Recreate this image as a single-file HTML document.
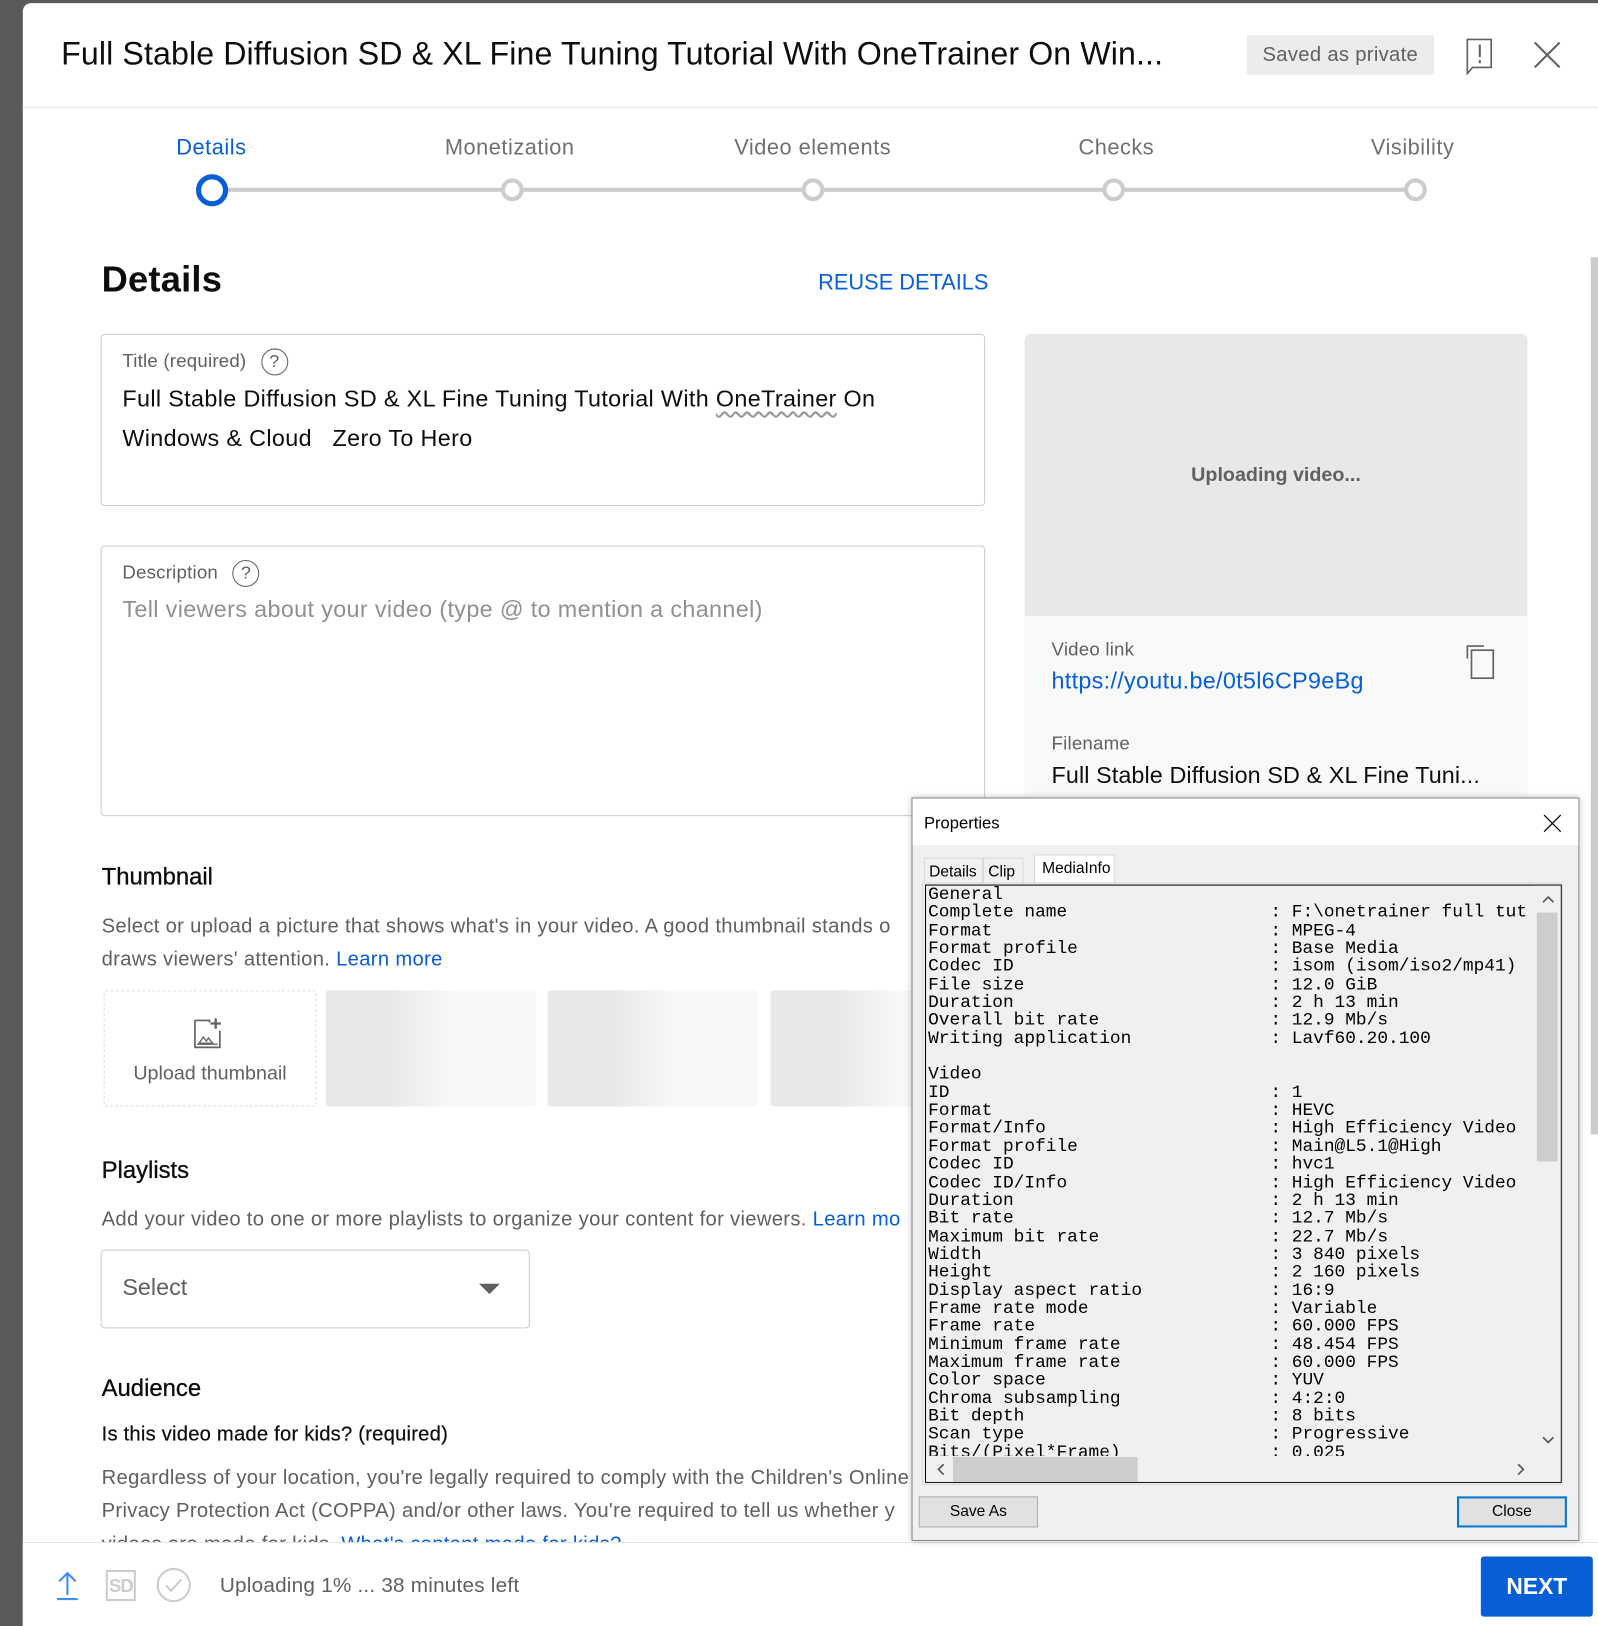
<!DOCTYPE html>
<html><head><meta charset="utf-8"><style>
*{box-sizing:border-box;margin:0;padding:0}
html,body{width:1598px;height:1626px;overflow:hidden;background:#fff}
#w{position:absolute;left:0;top:0;width:1541px;height:1568px;transform:scale(1.03699);transform-origin:0 0;font-family:"Liberation Sans",sans-serif;overflow:hidden;background:#5a5a5a}
.a{position:absolute}
.dlg{position:absolute;left:22px;top:3px;width:1530px;height:1580px;background:#fff;border-radius:8px 0 0 8px}
.step{position:absolute;top:131px;font-size:21px;color:#707070;letter-spacing:.5px}
.dot{position:absolute;top:172px;width:22px;height:22px;border:4px solid #ccc;border-radius:50%;background:#fff}
.box{position:absolute;border:1px solid #ccc;border-radius:4px}
.lbl{font-size:18px;color:#606060;letter-spacing:.2px}
.q{display:inline-block;width:26px;height:26px;border:1.5px solid #606060;border-radius:50%;text-align:center;font-size:17px;line-height:23px;color:#606060;vertical-align:middle;margin-left:14px}
.h2{font-size:23px;color:#0d0d0d;letter-spacing:0;-webkit-text-stroke:.3px #0d0d0d}
.p{font-size:19.5px;color:#606060;letter-spacing:.3px;line-height:32px}
.lnk{color:#065fd4}
.th{position:absolute;top:955px;width:203px;height:112px;border-radius:3px;background:linear-gradient(90deg,#e8e8e8 30%,#f8f8f8 60%)}
pre{font-family:"Liberation Mono",monospace;font-size:17.2px;line-height:17.35px;color:#000;letter-spacing:0}
</style></head><body><div id="w">
<div class="dlg"></div>
<div class="a" style="left:59px;top:34px;font-size:31px;color:#0d0d0d;letter-spacing:.1px;white-space:nowrap">Full Stable Diffusion SD &amp; XL Fine Tuning Tutorial With OneTrainer On Win...</div>
<div class="a" style="left:1202px;top:34px;width:181px;height:38px;background:#ececec;border-radius:2px;font-size:19.5px;color:#606060;text-align:center;line-height:38px;letter-spacing:.3px">Saved as private</div>
<svg class="a" style="left:1412px;top:36px" width="30" height="36" viewBox="0 0 30 36"><path d="M3 2h23v27H8l-5 6z" fill="none" stroke="#606060" stroke-width="1.6"/><path d="M15 7v12M15 22v3" stroke="#606060" stroke-width="2"/></svg>
<svg class="a" style="left:1478px;top:39px" width="28" height="28"><path d="M2 2l24 24M26 2L2 26" stroke="#606060" stroke-width="2"/></svg>
<div class="a" style="left:22px;top:103px;width:1520px;height:1px;background:#e5e5e5"></div>
<div class="a" style="left:205px;top:181px;width:1160px;height:4px;background:#ccc"></div>
<div class="step" style="left:170px;color:#065fd4">Details</div>
<div class="step" style="left:429px">Monetization</div>
<div class="step" style="left:708px">Video elements</div>
<div class="step" style="left:1040px">Checks</div>
<div class="step" style="left:1322px">Visibility</div>
<div class="dot" style="left:189px;top:168px;width:31px;height:31px;border:5px solid #065fd4"></div>
<div class="dot" style="left:483px"></div>
<div class="dot" style="left:773px"></div>
<div class="dot" style="left:1063px"></div>
<div class="dot" style="left:1354px"></div>
<div class="a" style="left:98px;top:250px;font-size:35px;color:#0d0d0d;font-weight:bold;letter-spacing:.2px">Details</div>
<div class="a" style="left:789px;top:261px;font-size:21px;color:#065fd4;letter-spacing:0">REUSE DETAILS</div>
<div class="box" style="left:97px;top:322px;width:853px;height:166px"></div>
<div class="a lbl" style="left:118px;top:336px">Title (required)<span class="q">?</span></div>
<div class="a" style="left:118px;top:366px;font-size:22.5px;color:#0d0d0d;line-height:38px;letter-spacing:.35px">Full Stable Diffusion SD &amp; XL Fine Tuning Tutorial With <span style="text-decoration:underline wavy #999;text-underline-offset:4px">OneTrainer</span> On<br>Windows &amp; Cloud &nbsp; Zero To Hero</div>
<div class="box" style="left:97px;top:526px;width:853px;height:261px"></div>
<div class="a lbl" style="left:118px;top:540px">Description<span class="q">?</span></div>
<div class="a" style="left:118px;top:575px;font-size:22.5px;color:#909090;letter-spacing:.35px">Tell viewers about your video (type @ to mention a channel)</div>
<div class="a" style="left:988px;top:322px;width:485px;height:272px;background:#e8e8e8;border-radius:6px 6px 0 0"></div>
<div class="a" style="left:988px;top:448px;width:485px;text-align:center;font-size:19px;color:#606060;font-weight:bold">Uploading video...</div>
<div class="a" style="left:988px;top:594px;width:485px;height:180px;background:#f9f9f9"></div>
<div class="a lbl" style="left:1014px;top:616px">Video link</div>
<div class="a" style="left:1014px;top:644px;font-size:22.5px;color:#065fd4;letter-spacing:.3px">https://youtu.be/0t5l6CP9eBg</div>
<svg class="a" style="left:1413px;top:621px" width="30" height="36"><path d="M2 14V2h16" fill="none" stroke="#606060" stroke-width="1.6"/><rect x="6" y="6" width="21" height="27" fill="none" stroke="#606060" stroke-width="1.6"/></svg>
<div class="a lbl" style="left:1014px;top:707px">Filename</div>
<div class="a" style="left:1014px;top:735px;font-size:22.5px;color:#0d0d0d;letter-spacing:.1px">Full Stable Diffusion SD &amp; XL Fine Tuni...</div>
<div class="a" style="left:1534px;top:248px;width:7px;height:846px;background:#ccc"></div>
<div class="a h2" style="left:98px;top:832px">Thumbnail</div>
<div class="a p" style="left:98px;top:877px;white-space:nowrap">Select or upload a picture that shows what's in your video. A good thumbnail stands o<br>draws viewers' attention. <span class="lnk">Learn more</span></div>
<div class="a" style="left:100px;top:955px;width:205px;height:112px;border:1px dashed #ddd;border-radius:2px"></div>
<svg class="a" style="left:186px;top:981px" width="32" height="32"><path d="M2 3h14v2M2 3v26h24V13" fill="none" stroke="#606060" stroke-width="1.6"/><path d="M22 1v10M17 6h10" stroke="#606060" stroke-width="2.2"/><path d="M6 25l4-6 3 4 2-3 4 5z" fill="none" stroke="#606060" stroke-width="1.3"/><path d="M4 26h20" stroke="#606060" stroke-width="1.3"/></svg>
<div class="a" style="left:100px;top:1025px;width:205px;text-align:center;font-size:19px;color:#606060;letter-spacing:0">Upload thumbnail</div>
<div class="th" style="left:314px"></div>
<div class="th" style="left:528px"></div>
<div class="th" style="left:743px"></div>
<div class="a h2" style="left:98px;top:1115px">Playlists</div>
<div class="a p" style="left:98px;top:1160px;white-space:nowrap">Add your video to one or more playlists to organize your content for viewers. <span class="lnk">Learn mo</span></div>
<div class="box" style="left:97px;top:1205px;width:414px;height:76px"></div>
<div class="a" style="left:118px;top:1229px;font-size:22.5px;color:#606060">Select</div>
<div class="a" style="left:462px;top:1238px;width:0;height:0;border-left:10px solid transparent;border-right:10px solid transparent;border-top:10px solid #606060"></div>
<div class="a h2" style="left:98px;top:1325px">Audience</div>
<div class="a" style="left:98px;top:1372px;font-size:19.5px;color:#0d0d0d;letter-spacing:.2px;-webkit-text-stroke:.2px #0d0d0d">Is this video made for kids? (required)</div>
<div class="a p" style="left:98px;top:1409px;white-space:nowrap">Regardless of your location, you're legally required to comply with the Children's Online<br>Privacy Protection Act (COPPA) and/or other laws. You're required to tell us whether y<br>videos are made for kids. <span class="lnk">What's content made for kids?</span></div>
<div class="a" style="left:22px;top:1487px;width:1520px;height:90px;background:#fff;border-top:1px solid #e5e5e5;border-radius:0 0 0 8px"></div>
<svg class="a" style="left:52px;top:1514px" width="26" height="30"><path d="M13 24V3M5 11l8-8 8 8M3 28h20" fill="none" stroke="#3e8ef7" stroke-width="2"/></svg>
<div class="a" style="left:102px;top:1514px;width:29px;height:30px;border:2px solid #ccc;font-size:18px;font-weight:bold;color:#ccc;text-align:center;line-height:26px;letter-spacing:-1px">SD</div>
<div class="a" style="left:151px;top:1512px;width:33px;height:33px;border:2px solid #ccc;border-radius:50%"></div>
<svg class="a" style="left:151px;top:1512px" width="33" height="33"><path d="M9 17l5 5 10-11" fill="none" stroke="#ccc" stroke-width="2"/></svg>
<div class="a" style="left:212px;top:1518px;font-size:20px;color:#606060;letter-spacing:.2px">Uploading 1% ... 38 minutes left</div>
<div class="a" style="left:1428px;top:1501px;width:108px;height:58px;background:#065fd4;border-radius:3px;color:#fff;font-size:22px;font-weight:bold;text-align:center;line-height:58px">NEXT</div>
<div class="a" style="left:879px;top:769px;width:644px;height:717px;background:#f0f0f0;border:1px solid #888;box-shadow:0 0 6px rgba(0,0,0,.25)"></div>
<div class="a" style="left:880px;top:770px;width:642px;height:45px;background:#fff"></div>
<div class="a" style="left:891px;top:786px;font-size:16px;color:#000">Properties</div>
<svg class="a" style="left:1488px;top:785px" width="18" height="18"><path d="M1 1l16 16M17 1L1 17" stroke="#000" stroke-width="1.2"/></svg>
<div class="a" style="left:891px;top:827px;width:57px;height:25px;border:1px solid #d9d9d9;border-bottom:none;font-size:15px;line-height:25px;padding-left:4px">Details</div>
<div class="a" style="left:948px;top:827px;width:39px;height:25px;border:1px solid #d9d9d9;border-bottom:none;font-size:15px;line-height:25px;padding-left:4px">Clip</div>
<div class="a" style="left:997px;top:824px;width:78px;height:28px;background:#fff;border:1px solid #d9d9d9;border-bottom:none;font-size:15px;line-height:26px;padding-left:7px">MediaInfo</div>
<div class="a" style="left:889px;top:851px;width:618px;height:581px;border:1px solid #d9d9d9"></div>
<div class="a" style="left:892px;top:853px;width:614px;height:577px;border:1px solid #000;background:#f0f0f0;overflow:hidden">
<pre class="a" style="left:2px;top:1px">General
Complete name                   : F:\onetrainer full tut
Format                          : MPEG-4
Format profile                  : Base Media
Codec ID                        : isom (isom/iso2/mp41)
File size                       : 12.0 GiB
Duration                        : 2 h 13 min
Overall bit rate                : 12.9 Mb/s
Writing application             : Lavf60.20.100

Video
ID                              : 1
Format                          : HEVC
Format/Info                     : High Efficiency Video
Format profile                  : Main@L5.1@High
Codec ID                        : hvc1
Codec ID/Info                   : High Efficiency Video
Duration                        : 2 h 13 min
Bit rate                        : 12.7 Mb/s
Maximum bit rate                : 22.7 Mb/s
Width                           : 3 840 pixels
Height                          : 2 160 pixels
Display aspect ratio            : 16:9
Frame rate mode                 : Variable
Frame rate                      : 60.000 FPS
Minimum frame rate              : 48.454 FPS
Maximum frame rate              : 60.000 FPS
Color space                     : YUV
Chroma subsampling              : 4:2:0
Bit depth                       : 8 bits
Scan type                       : Progressive
Bits/(Pixel*Frame)              : 0.025</pre>
<div class="a" style="left:585px;top:0;width:28px;height:550px;background:#f0f0f0"></div>
<svg class="a" style="left:593px;top:8px" width="14" height="10"><path d="M2 8l5-5 5 5" fill="none" stroke="#555" stroke-width="1.6"/></svg>
<div class="a" style="left:589px;top:26px;width:20px;height:240px;background:#cdcdcd"></div>
<svg class="a" style="left:593px;top:530px" width="14" height="10"><path d="M2 2l5 5 5-5" fill="none" stroke="#555" stroke-width="1.6"/></svg>
<div class="a" style="left:0;top:550px;width:613px;height:26px;background:#f0f0f0"></div>
<svg class="a" style="left:9px;top:556px" width="10" height="14"><path d="M8 2L3 7l5 5" fill="none" stroke="#555" stroke-width="1.6"/></svg>
<div class="a" style="left:26px;top:551px;width:178px;height:24px;background:#cdcdcd"></div>
<svg class="a" style="left:569px;top:556px" width="10" height="14"><path d="M2 2l5 5-5 5" fill="none" stroke="#555" stroke-width="1.6"/></svg>
</div>
<div class="a" style="left:886px;top:1443px;width:115px;height:30px;background:#e1e1e1;border:1px solid #adadad;font-size:15px;text-align:center;line-height:28px">Save As</div>
<div class="a" style="left:1405px;top:1443px;width:106px;height:30px;background:#e1e1e1;border:2px solid #0078d7;font-size:15px;text-align:center;line-height:26px">Close</div>
</div></body></html>
